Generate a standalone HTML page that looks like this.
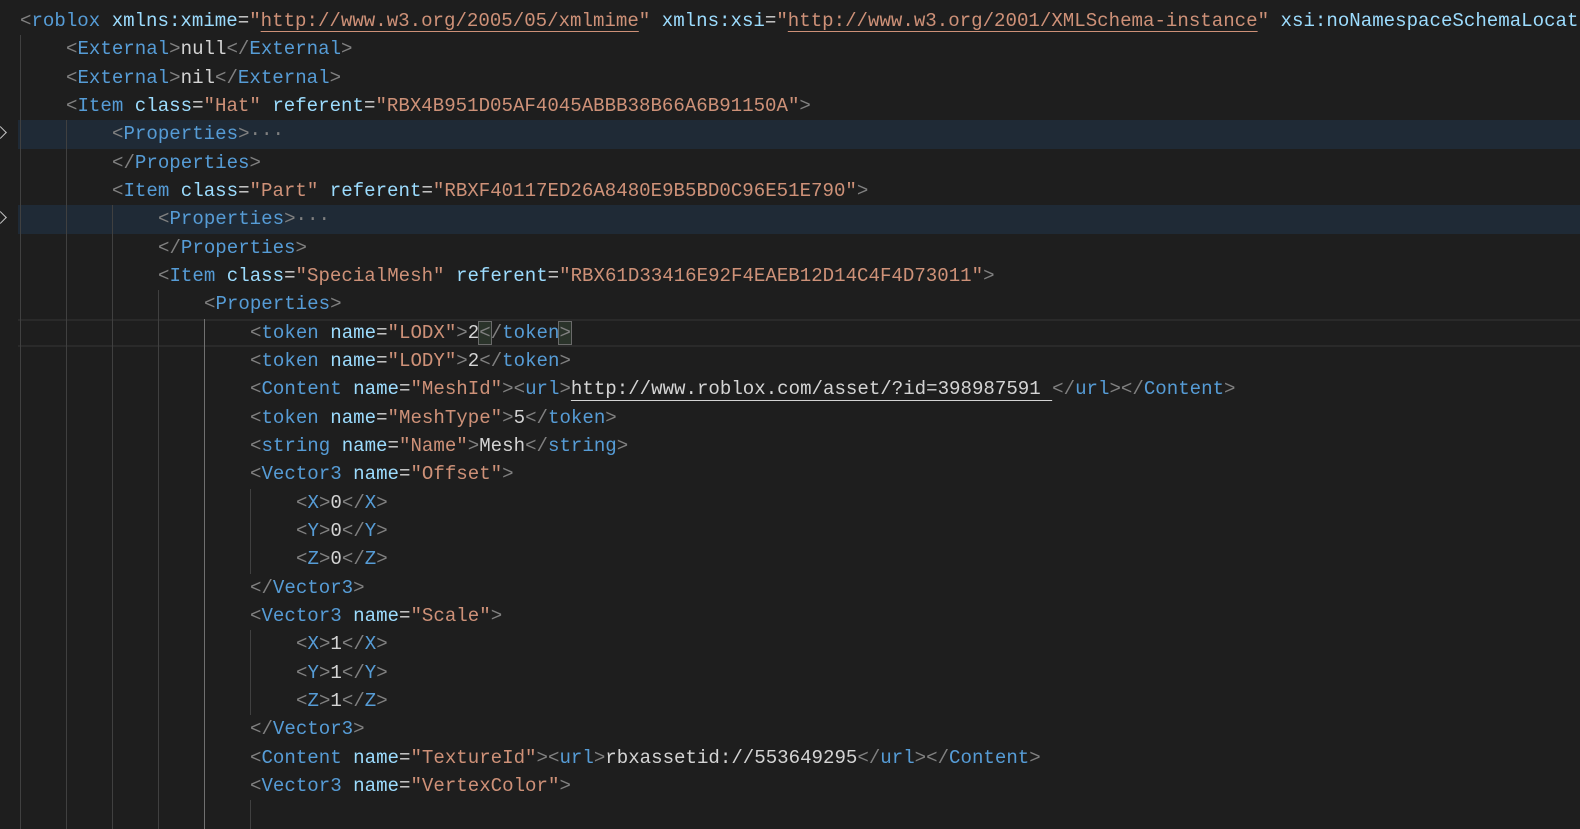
<!DOCTYPE html>
<html><head><meta charset="utf-8"><style>
html,body{margin:0;padding:0;background:#1e1e1e;width:1580px;height:812px;overflow:hidden}
.l{position:absolute;left:0;right:0;height:28.33px;line-height:28.33px;font-family:"Liberation Mono",monospace;font-size:19.1px;white-space:pre;color:#d4d4d4}
.c{position:absolute;top:0}
.hl{background:#1f2a36;left:18px}
.cur{border-top:2px solid #2a2a2a;border-bottom:2px solid #2a2a2a;box-sizing:border-box;left:18px}
.g{position:absolute;top:0;width:1px;height:28.33px;background:#404040}
.b{color:#808080}.t{color:#569cd6}.a{color:#9cdcfe}.s{color:#ce9178}
.u{text-decoration:underline;text-decoration-color:#ce9178;text-underline-offset:5px}
.w{text-decoration:underline;text-decoration-color:#d4d4d4;text-underline-offset:6px}
.chev{position:absolute;left:-4px;top:8px;width:8px;height:8px;border-right:1.5px solid #c5c5c5;border-top:1.5px solid #c5c5c5;transform:rotate(45deg)}
.box{outline:1px solid #6a6a6a;background:#2a332a}
</style></head><body>
<div class="l" style="top:7px"><span class="c" style="left:20px"><span class="b">&lt;</span><span class="t">roblox</span> <span class="a">xmlns:xmime</span>=<span class="s">"<span class="u">http://www.w3.org/2005/05/xmlmime</span>"</span> <span class="a">xmlns:xsi</span>=<span class="s">"<span class="u">http://www.w3.org/2001/XMLSchema-instance</span>"</span> <span class="a">xsi:noNamespaceSchemaLocat</span></span></div>
<div class="l" style="top:35.33px"><i class="g" style="left:20px"></i><span class="c" style="left:66px"><span class="b">&lt;</span><span class="t">External</span><span class="b">&gt;</span>null<span class="b">&lt;/</span><span class="t">External</span><span class="b">&gt;</span></span></div>
<div class="l" style="top:63.66px"><i class="g" style="left:20px"></i><span class="c" style="left:66px"><span class="b">&lt;</span><span class="t">External</span><span class="b">&gt;</span>nil<span class="b">&lt;/</span><span class="t">External</span><span class="b">&gt;</span></span></div>
<div class="l" style="top:92px"><i class="g" style="left:20px"></i><span class="c" style="left:66px"><span class="b">&lt;</span><span class="t">Item</span> <span class="a">class</span>=<span class="s">"Hat"</span> <span class="a">referent</span>=<span class="s">"RBX4B951D05AF4045ABBB38B66A6B91150A"</span><span class="b">&gt;</span></span></div>
<div class="l hl" style="top:120.33px;left:18px"></div>
<div class="l" style="top:120.33px"><i class="chev"></i><i class="g" style="left:20px"></i><i class="g" style="left:66px"></i><span class="c" style="left:112px"><span class="b">&lt;</span><span class="t">Properties</span><span class="b">&gt;</span><span class="b">···</span></span></div>
<div class="l" style="top:148.66px"><i class="g" style="left:20px"></i><i class="g" style="left:66px"></i><span class="c" style="left:112px"><span class="b">&lt;/</span><span class="t">Properties</span><span class="b">&gt;</span></span></div>
<div class="l" style="top:177px"><i class="g" style="left:20px"></i><i class="g" style="left:66px"></i><span class="c" style="left:112px"><span class="b">&lt;</span><span class="t">Item</span> <span class="a">class</span>=<span class="s">"Part"</span> <span class="a">referent</span>=<span class="s">"RBXF40117ED26A8480E9B5BD0C96E51E790"</span><span class="b">&gt;</span></span></div>
<div class="l hl" style="top:205.33px;left:18px"></div>
<div class="l" style="top:205.33px"><i class="chev"></i><i class="g" style="left:20px"></i><i class="g" style="left:66px"></i><i class="g" style="left:112px"></i><span class="c" style="left:158px"><span class="b">&lt;</span><span class="t">Properties</span><span class="b">&gt;</span><span class="b">···</span></span></div>
<div class="l" style="top:233.66px"><i class="g" style="left:20px"></i><i class="g" style="left:66px"></i><i class="g" style="left:112px"></i><span class="c" style="left:158px"><span class="b">&lt;/</span><span class="t">Properties</span><span class="b">&gt;</span></span></div>
<div class="l" style="top:262px"><i class="g" style="left:20px"></i><i class="g" style="left:66px"></i><i class="g" style="left:112px"></i><span class="c" style="left:158px"><span class="b">&lt;</span><span class="t">Item</span> <span class="a">class</span>=<span class="s">"SpecialMesh"</span> <span class="a">referent</span>=<span class="s">"RBX61D33416E92F4EAEB12D14C4F4D73011"</span><span class="b">&gt;</span></span></div>
<div class="l" style="top:290.33px"><i class="g" style="left:20px"></i><i class="g" style="left:66px"></i><i class="g" style="left:112px"></i><i class="g" style="left:158px"></i><span class="c" style="left:204px"><span class="b">&lt;</span><span class="t">Properties</span><span class="b">&gt;</span></span></div>
<div class="l cur" style="top:318.66px;left:18px"></div>
<div class="l" style="top:318.66px"><i class="g" style="left:20px"></i><i class="g" style="left:66px"></i><i class="g" style="left:112px"></i><i class="g" style="left:158px"></i><i class="g" style="left:204px;background:#707070"></i><span class="c" style="left:250px"><span class="b">&lt;</span><span class="t">token</span> <span class="a">name</span>=<span class="s">"LODX"</span><span class="b">&gt;</span>2<span class="b box">&lt;</span><span class="b">/</span><span class="t">token</span><span class="b box">&gt;</span></span></div>
<div class="l" style="top:347px"><i class="g" style="left:20px"></i><i class="g" style="left:66px"></i><i class="g" style="left:112px"></i><i class="g" style="left:158px"></i><i class="g" style="left:204px;background:#707070"></i><span class="c" style="left:250px"><span class="b">&lt;</span><span class="t">token</span> <span class="a">name</span>=<span class="s">"LODY"</span><span class="b">&gt;</span>2<span class="b">&lt;/</span><span class="t">token</span><span class="b">&gt;</span></span></div>
<div class="l" style="top:375.33px"><i class="g" style="left:20px"></i><i class="g" style="left:66px"></i><i class="g" style="left:112px"></i><i class="g" style="left:158px"></i><i class="g" style="left:204px;background:#707070"></i><span class="c" style="left:250px"><span class="b">&lt;</span><span class="t">Content</span> <span class="a">name</span>=<span class="s">"MeshId"</span><span class="b">&gt;&lt;</span><span class="t">url</span><span class="b">&gt;</span><span class="w">http://www.roblox.com/asset/?id=398987591 </span><span class="b">&lt;/</span><span class="t">url</span><span class="b">&gt;&lt;/</span><span class="t">Content</span><span class="b">&gt;</span></span></div>
<div class="l" style="top:403.66px"><i class="g" style="left:20px"></i><i class="g" style="left:66px"></i><i class="g" style="left:112px"></i><i class="g" style="left:158px"></i><i class="g" style="left:204px;background:#707070"></i><span class="c" style="left:250px"><span class="b">&lt;</span><span class="t">token</span> <span class="a">name</span>=<span class="s">"MeshType"</span><span class="b">&gt;</span>5<span class="b">&lt;/</span><span class="t">token</span><span class="b">&gt;</span></span></div>
<div class="l" style="top:432px"><i class="g" style="left:20px"></i><i class="g" style="left:66px"></i><i class="g" style="left:112px"></i><i class="g" style="left:158px"></i><i class="g" style="left:204px;background:#707070"></i><span class="c" style="left:250px"><span class="b">&lt;</span><span class="t">string</span> <span class="a">name</span>=<span class="s">"Name"</span><span class="b">&gt;</span>Mesh<span class="b">&lt;/</span><span class="t">string</span><span class="b">&gt;</span></span></div>
<div class="l" style="top:460.33px"><i class="g" style="left:20px"></i><i class="g" style="left:66px"></i><i class="g" style="left:112px"></i><i class="g" style="left:158px"></i><i class="g" style="left:204px;background:#707070"></i><span class="c" style="left:250px"><span class="b">&lt;</span><span class="t">Vector3</span> <span class="a">name</span>=<span class="s">"Offset"</span><span class="b">&gt;</span></span></div>
<div class="l" style="top:488.66px"><i class="g" style="left:20px"></i><i class="g" style="left:66px"></i><i class="g" style="left:112px"></i><i class="g" style="left:158px"></i><i class="g" style="left:204px;background:#707070"></i><i class="g" style="left:250px"></i><span class="c" style="left:296px"><span class="b">&lt;</span><span class="t">X</span><span class="b">&gt;</span>0<span class="b">&lt;/</span><span class="t">X</span><span class="b">&gt;</span></span></div>
<div class="l" style="top:517px"><i class="g" style="left:20px"></i><i class="g" style="left:66px"></i><i class="g" style="left:112px"></i><i class="g" style="left:158px"></i><i class="g" style="left:204px;background:#707070"></i><i class="g" style="left:250px"></i><span class="c" style="left:296px"><span class="b">&lt;</span><span class="t">Y</span><span class="b">&gt;</span>0<span class="b">&lt;/</span><span class="t">Y</span><span class="b">&gt;</span></span></div>
<div class="l" style="top:545.33px"><i class="g" style="left:20px"></i><i class="g" style="left:66px"></i><i class="g" style="left:112px"></i><i class="g" style="left:158px"></i><i class="g" style="left:204px;background:#707070"></i><i class="g" style="left:250px"></i><span class="c" style="left:296px"><span class="b">&lt;</span><span class="t">Z</span><span class="b">&gt;</span>0<span class="b">&lt;/</span><span class="t">Z</span><span class="b">&gt;</span></span></div>
<div class="l" style="top:573.66px"><i class="g" style="left:20px"></i><i class="g" style="left:66px"></i><i class="g" style="left:112px"></i><i class="g" style="left:158px"></i><i class="g" style="left:204px;background:#707070"></i><span class="c" style="left:250px"><span class="b">&lt;/</span><span class="t">Vector3</span><span class="b">&gt;</span></span></div>
<div class="l" style="top:602px"><i class="g" style="left:20px"></i><i class="g" style="left:66px"></i><i class="g" style="left:112px"></i><i class="g" style="left:158px"></i><i class="g" style="left:204px;background:#707070"></i><span class="c" style="left:250px"><span class="b">&lt;</span><span class="t">Vector3</span> <span class="a">name</span>=<span class="s">"Scale"</span><span class="b">&gt;</span></span></div>
<div class="l" style="top:630.33px"><i class="g" style="left:20px"></i><i class="g" style="left:66px"></i><i class="g" style="left:112px"></i><i class="g" style="left:158px"></i><i class="g" style="left:204px;background:#707070"></i><i class="g" style="left:250px"></i><span class="c" style="left:296px"><span class="b">&lt;</span><span class="t">X</span><span class="b">&gt;</span>1<span class="b">&lt;/</span><span class="t">X</span><span class="b">&gt;</span></span></div>
<div class="l" style="top:658.66px"><i class="g" style="left:20px"></i><i class="g" style="left:66px"></i><i class="g" style="left:112px"></i><i class="g" style="left:158px"></i><i class="g" style="left:204px;background:#707070"></i><i class="g" style="left:250px"></i><span class="c" style="left:296px"><span class="b">&lt;</span><span class="t">Y</span><span class="b">&gt;</span>1<span class="b">&lt;/</span><span class="t">Y</span><span class="b">&gt;</span></span></div>
<div class="l" style="top:687px"><i class="g" style="left:20px"></i><i class="g" style="left:66px"></i><i class="g" style="left:112px"></i><i class="g" style="left:158px"></i><i class="g" style="left:204px;background:#707070"></i><i class="g" style="left:250px"></i><span class="c" style="left:296px"><span class="b">&lt;</span><span class="t">Z</span><span class="b">&gt;</span>1<span class="b">&lt;/</span><span class="t">Z</span><span class="b">&gt;</span></span></div>
<div class="l" style="top:715.33px"><i class="g" style="left:20px"></i><i class="g" style="left:66px"></i><i class="g" style="left:112px"></i><i class="g" style="left:158px"></i><i class="g" style="left:204px;background:#707070"></i><span class="c" style="left:250px"><span class="b">&lt;/</span><span class="t">Vector3</span><span class="b">&gt;</span></span></div>
<div class="l" style="top:743.66px"><i class="g" style="left:20px"></i><i class="g" style="left:66px"></i><i class="g" style="left:112px"></i><i class="g" style="left:158px"></i><i class="g" style="left:204px;background:#707070"></i><span class="c" style="left:250px"><span class="b">&lt;</span><span class="t">Content</span> <span class="a">name</span>=<span class="s">"TextureId"</span><span class="b">&gt;&lt;</span><span class="t">url</span><span class="b">&gt;</span>rbxassetid://553649295<span class="b">&lt;/</span><span class="t">url</span><span class="b">&gt;&lt;/</span><span class="t">Content</span><span class="b">&gt;</span></span></div>
<div class="l" style="top:772px"><i class="g" style="left:20px"></i><i class="g" style="left:66px"></i><i class="g" style="left:112px"></i><i class="g" style="left:158px"></i><i class="g" style="left:204px;background:#707070"></i><span class="c" style="left:250px"><span class="b">&lt;</span><span class="t">Vector3</span> <span class="a">name</span>=<span class="s">"VertexColor"</span><span class="b">&gt;</span></span></div>
<div class="l" style="top:800.33px"><i class="g" style="left:20px"></i><i class="g" style="left:66px"></i><i class="g" style="left:112px"></i><i class="g" style="left:158px"></i><i class="g" style="left:204px;background:#707070"></i><i class="g" style="left:250px"></i></div>
</body></html>
